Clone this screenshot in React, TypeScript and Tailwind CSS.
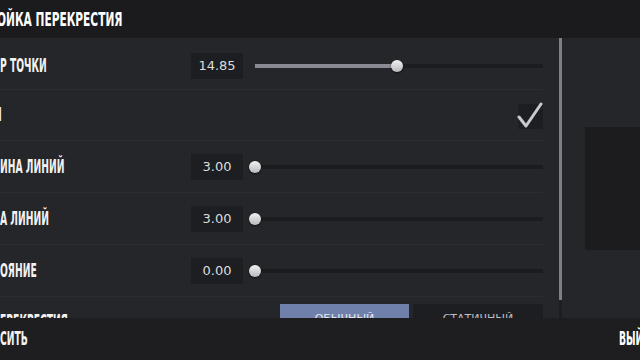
import React from 'react';

const cond = { fontFamily: '"Liberation Sans Narrow", "DejaVu Sans Condensed", "Liberation Sans", sans-serif' };
const num = { fontFamily: '"DejaVu Sans", "Liberation Sans", sans-serif' };

interface SliderRowProps {
  label: string;
  value: string;
  fraction: number;
  className?: string;
}

const Slider = ({ fraction }: { fraction: number }) => {
  const px = Math.round(288 * fraction);
  return (
    <div className="relative w-[288px] h-[4px] bg-[#1b1c1f]">
      <div className="absolute left-0 top-0 h-full bg-[#8a8a92]" style={{ width: px }} />
      <div
        className="absolute top-1/2 -translate-y-1/2 w-[12px] h-[12px] rounded-full bg-gradient-to-b from-[#f2f2f2] to-[#b9b9bd] shadow-[0_1px_2px_rgba(0,0,0,0.6)]"
        style={{ left: px - 6 }}
      />
    </div>
  );
};

const Label = ({ children, className = '' }: { children: React.ReactNode; className?: string }) => (
  <span
    className={`inline-block origin-left scale-x-[0.54] text-[19px] font-bold text-[#f2f2f2] whitespace-nowrap leading-none ${className}`}
    style={cond}
  >
    {children}
  </span>
);

const SliderRow = ({ label, value, fraction, className = '' }: SliderRowProps) => (
  <div className={`h-[52px] flex items-center border-b border-[#2c2d32] shrink-0 ${className}`}>
    <div className="flex-1 overflow-hidden">
      <Label>{label}</Label>
    </div>
    <div className="w-[52px] h-[26px] bg-[#1d1e21] flex items-center justify-center text-[13px] text-[#dcdcdc] mr-[12px]" style={num}>
      {value}
    </div>
    <Slider fraction={fraction} />
  </div>
);

export default function App() {
  return (
    <div className="w-[640px] h-[360px] overflow-hidden flex flex-col bg-[#25262a]">
      {/* Header */}
      <div className="h-[38px] shrink-0 bg-[#1b1b1e] flex items-center overflow-hidden">
        <Label className="-ml-[3px] text-[20px] text-white scale-x-[0.59]">ОЙКА ПЕРЕКРЕСТИЯ</Label>
      </div>

      <div className="flex-1 flex overflow-hidden">
        {/* Settings list */}
        <div className="w-[543px] flex flex-col">
          <SliderRow label="Р ТОЧКИ" value="14.85" fraction={0.493} className="pt-[5px]" />

          <div className="h-[51px] flex items-center border-b border-[#2c2d32] shrink-0">
            <div className="flex-1 overflow-hidden">
              <Label className="-ml-[6px]">Н</Label>
            </div>
            <div className="relative w-[25px] h-[25px] bg-[#1d1e21] mt-[3px]">
              <svg className="absolute -left-[1px] -top-[2px] w-[26px] h-[26px]" viewBox="0 0 26 26" fill="none">
                <path d="M2 15 L9 24 L24 2" stroke="#c9c9ce" strokeWidth={3} strokeLinecap="round" strokeLinejoin="round" />
              </svg>
            </div>
          </div>

          <SliderRow label="ИНА ЛИНИЙ" value="3.00" fraction={0} />
          <SliderRow label="А ЛИНИЙ" value="3.00" fraction={0} />
          <SliderRow label="ОЯНИЕ" value="0.00" fraction={0} />

          <div className="h-[52px] flex items-start pt-[7px] shrink-0">
            <div className="flex-1 pt-[6px] overflow-hidden">
              <Label>ЕРЕКРЕСТИЯ</Label>
            </div>
            <div className="w-[129px] h-[30px] bg-[#6f80aa] mr-[4px] flex items-center justify-center text-[11px] text-[#e6e9f2]" style={num}>
              ОБЫЧНЫЙ
            </div>
            <div className="w-[130px] h-[30px] bg-[#1d1e21] flex items-center justify-center text-[11px] text-[#bdbdc2]" style={num}>
              СТАТИЧНЫЙ
            </div>
          </div>
        </div>

        {/* Scrollbar */}
        <div className="w-[20px] flex pl-[16px]">
          <div className="w-[3px] flex flex-col">
            <div className="h-[262px] bg-[#7f7f86]" />
            <div className="flex-1 bg-[#1d1e21]" />
          </div>
        </div>

        {/* Preview panel */}
        <div className="flex-1 pl-[22px] pt-[89px]">
          <div className="h-[123px] bg-[#1c1c1f]" />
        </div>
      </div>

      {/* Footer */}
      <div className="h-[42px] shrink-0 bg-[#1e1e20] flex items-center justify-between">
        <div className="w-[40px] overflow-hidden">
          <Label className="text-[#d9d9dc] scale-x-[0.5]">СИТЬ</Label>
        </div>
        <div className="w-[21px] overflow-hidden">
          <Label className="text-white">ВЫЙТИ</Label>
        </div>
      </div>
    </div>
  );
}
